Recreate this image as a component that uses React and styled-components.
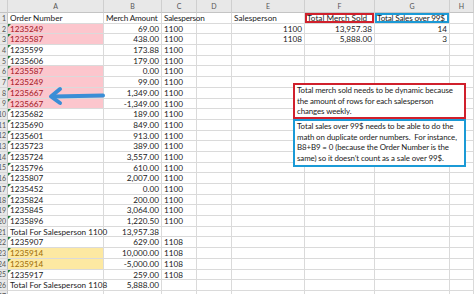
import React from 'react'
import styled, { createGlobalStyle, css } from 'styled-components'

const GlobalStyle = createGlobalStyle`
  html, body {
    margin: 0;
    padding: 0;
    background: #fff;
    overflow: hidden;
  }
`

const Sheet = styled.div`
  position: relative;
  display: grid;
  grid-template-columns: 8px 96px 58px 35px 35px 73px 70px 75px 1fr;
  grid-template-rows: 13px repeat(27, 10.7px);
  width: 474px;
  height: 294px;
  overflow: hidden;
  font-family: Lato, 'Liberation Sans', sans-serif;
  font-size: 8.2px;
  color: #222;
`

const ColHead = styled.div`
  background: #e8e8e8;
  border-right: 1px solid #cfcfcf;
  border-bottom: 1px solid #c4c4c4;
  color: #555;
  font-size: 7px;
  display: flex;
  align-items: center;
  justify-content: center;
`

const RowNum = styled.div`
  background: #e8e8e8;
  border-right: 1px solid #c4c4c4;
  border-bottom: 1px solid #d6d6d6;
  color: #555;
  font-size: 7px;
  display: flex;
  align-items: center;
  justify-content: flex-end;
  overflow: hidden;
  padding-right: 1px;
`

const fills = {
  bad: css`background: #fcc6cd; color: #a1161f;`,
  warn: css`background: #fde9a2; color: #9c6a05;`,
}

const boxes = {
  red: css`box-shadow: inset 0 0 0 2px #d0202c;`,
  blue: css`box-shadow: inset 0 0 0 2px #1b9ad6;`,
}

const Cell = styled.div`
  position: relative;
  border-right: 1px solid #dadada;
  border-bottom: 1px solid #dadada;
  padding: 0 2px;
  line-height: 10px;
  white-space: nowrap;
  letter-spacing: ${p => (p.$tight ? '-0.2px' : 'normal')};
  text-align: ${p => p.$align || 'left'};
  ${p => p.$fill && fills[p.$fill]}
  ${p => p.$box && boxes[p.$box]}
  ${p => p.$tri && css`
    &::before {
      content: '';
      position: absolute;
      left: 0;
      top: 0;
      border-top: 3px solid #1f7a3a;
      border-right: 3px solid transparent;
    }
  `}
`

const Note = styled.div`
  position: absolute;
  left: 293px;
  top: ${p => p.$top}px;
  width: 173px;
  height: ${p => p.$height}px;
  box-sizing: border-box;
  border: 2px solid ${p => p.$color};
  background: #fff;
  padding: 0 2px;
  font-size: 7.9px;
  line-height: 10.6px;
  letter-spacing: -0.1px;
  color: #222;
`

const Arrow = styled.svg`
  position: absolute;
  left: 46px;
  top: 86px;
`

const cols = ['A', 'B', 'C', 'D', 'E', 'F', 'G', 'H']

const rows = [
  { a: 'Order Number', b: 'Merch Amount', c: 'Salesperson', e: 'Salesperson', f: 'Total Merch Sold', g: 'Total Sales over 99$', head: true },
  { a: '1235249', fill: 'bad', b: '69.00', c: '1100', e: '1100', f: '13,957.38', g: '14' },
  { a: '1235587', fill: 'bad', b: '438.00', c: '1100', e: '1108', f: '5,888.00', g: '3' },
  { a: '1235599', b: '173.88', c: '1100' },
  { a: '1235606', b: '179.00', c: '1100' },
  { a: '1235587', fill: 'bad', b: '0.00', c: '1100' },
  { a: '1235249', fill: 'bad', b: '99.00', c: '1100' },
  { a: '1235667', fill: 'bad', b: '1,349.00', c: '1100' },
  { a: '1235667', fill: 'bad', b: '-1,349.00', c: '1100' },
  { a: '1235682', b: '189.00', c: '1100' },
  { a: '1235690', b: '849.00', c: '1100' },
  { a: '1235601', b: '913.00', c: '1100' },
  { a: '1235723', b: '389.00', c: '1100' },
  { a: '1235724', b: '3,557.00', c: '1100' },
  { a: '1235796', b: '610.00', c: '1100' },
  { a: '1235807', b: '2,007.00', c: '1100' },
  { a: '1235452', b: '0.00', c: '1100' },
  { a: '1235824', b: '200.00', c: '1100' },
  { a: '1235845', b: '3,064.00', c: '1100' },
  { a: '1235896', b: '1,220.50', c: '1100' },
  { a: 'Total For Salesperson 1100', b: '13,957.38', total: true },
  { a: '1235907', b: '629.00', c: '1108' },
  { a: '1235914', fill: 'warn', b: '10,000.00', c: '1108' },
  { a: '1235914', fill: 'warn', b: '-5,000.00', c: '1108' },
  { a: '1235917', b: '259.00', c: '1108' },
  { a: 'Total For Salesperson 1108', b: '5,888.00', total: true },
  {},
]

export default function App() {
  return (
    <>
      <GlobalStyle />
      <Sheet>
        <ColHead />
        {cols.map(c => <ColHead key={c}>{c}</ColHead>)}
        {rows.map((r, i) => (
          <React.Fragment key={i}>
            <RowNum>{i + 1}</RowNum>
            <Cell $fill={r.fill} $tri={r.a && !r.head && !r.total}>{r.a}</Cell>
            <Cell $align={r.head ? 'left' : 'right'} $tight={r.head}>{r.b}</Cell>
            <Cell $tight={r.head}>{r.c}</Cell>
            <Cell />
            <Cell $align={r.head ? 'left' : 'right'}>{r.e}</Cell>
            <Cell $align={r.head ? 'left' : 'right'} $box={r.head ? 'red' : undefined}>{r.f}</Cell>
            <Cell $align={r.head ? 'left' : 'right'} $box={r.head ? 'blue' : undefined} $tight={r.head}>{r.g}</Cell>
            <Cell />
          </React.Fragment>
        ))}
        <Note $top={83} $height={36} $color="#d0202c">
          Total merch sold needs to be dynamic because the amount of rows for each salesperson changes weekly.
        </Note>
        <Note $top={119} $height={48} $color="#1b9ad6">
          Total sales over 99$ needs to be able to do the math on duplicate order numbers.&nbsp; For instance, B8+B9 = 0 (because the Order Number is the same) so it doesn’t count as a sale over 99$.
        </Note>
        <Arrow width="60" height="20" viewBox="0 0 60 20">
          <path d="M57 9.5 L8 10.5" stroke="#3a8ed6" strokeWidth="4" strokeLinecap="round" fill="none" />
          <path d="M14 3 L5 10.5 L14 17" stroke="#3a8ed6" strokeWidth="4" strokeLinecap="round" strokeLinejoin="round" fill="none" />
        </Arrow>
      </Sheet>
    </>
  )
}
